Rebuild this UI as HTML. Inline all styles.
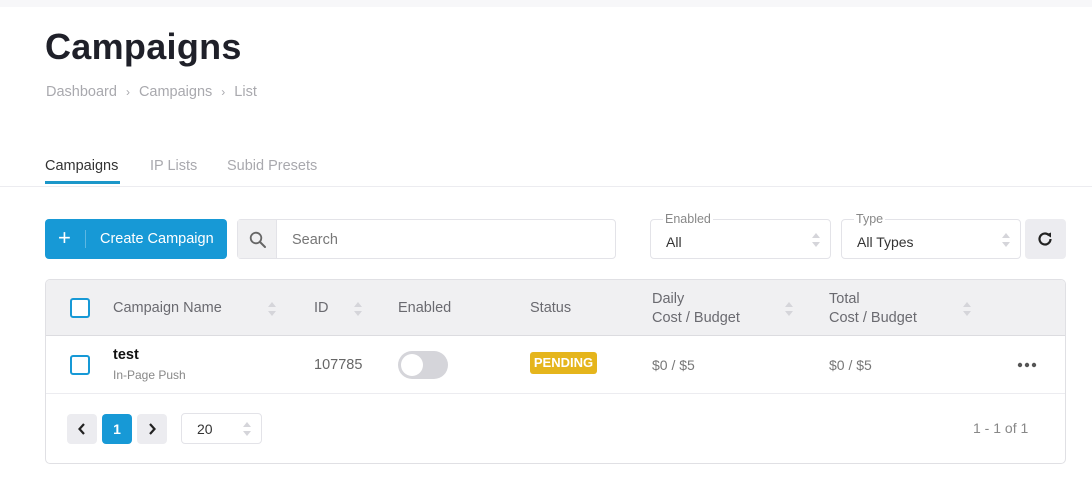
<!DOCTYPE html>
<html><head><meta charset="utf-8"><style>
*{box-sizing:border-box;margin:0;padding:0}
body{width:1092px;height:489px;background:#fff;font-family:"Liberation Sans",sans-serif;position:relative;overflow:hidden;color:#555}
.abs{position:absolute}
.topbar{left:0;top:0;width:1092px;height:7px;background:#f7f7f9}
h1{position:absolute;left:45px;top:26px;font-size:36px;font-weight:bold;color:#1f2029;letter-spacing:0.3px}
.bc{left:46px;top:84px;font-size:14.5px;color:#a9a9ae}
.bc span{margin:0 9px;font-size:12px}
.tab{top:158px;font-size:14.5px;color:#a9a9ae}
.line{left:0;top:186px;width:1092px;height:1px;background:#ececf0}
.btn{left:45px;top:219px;width:182px;height:40px;background:#1799d6;border-radius:4px;color:#fff;font-size:14.5px}
.search{left:237px;top:219px;width:379px;height:40px;border:1px solid #e3e3e8;border-radius:4px;background:#fff}
.sel{top:219px;height:40px;border:1px solid #e3e3e8;border-radius:4px;background:#fff;font-size:14px;color:#333}
.lbl{position:absolute;top:-8px;left:12px;background:#fff;padding:0 2px;font-size:12.5px;color:#888}
.arr{position:absolute;right:10px;top:13px;width:8px;height:14px}
.arr:before,.arr:after{content:"";position:absolute;left:0;border-left:4px solid transparent;border-right:4px solid transparent}
.arr:before{top:0;border-bottom:5px solid #d5d5da}
.arr:after{bottom:0;border-top:5px solid #d5d5da}
.tbl{left:45px;top:279px;width:1021px;height:185px;border:1px solid #e0e0e4;border-radius:5px;overflow:hidden;background:#fff}
.thead{position:absolute;left:0;top:0;width:100%;height:56px;background:#f0f0f2;border-bottom:1px solid #dcdce0}
.th{position:absolute;font-size:14.5px;color:#6a6a70}
.cb{position:absolute;width:20px;height:20px;border:2px solid #1799d6;border-radius:3px;background:#fff}
.row2{position:absolute;left:0;top:113px;width:100%;height:1px;background:#ececf0}
.pg{position:absolute;top:134px;width:30px;height:30px;border-radius:4px;background:#ececf0;font-size:14px;text-align:center;line-height:30px;color:#333;font-weight:bold}
.pg svg{position:absolute;left:10px;top:9px}
</style></head><body>
<div class="abs topbar"></div>
<h1>Campaigns</h1>
<div class="abs bc">Dashboard<span>›</span>Campaigns<span>›</span>List</div>
<div class="abs tab" style="left:45px;color:#333">Campaigns</div>
<div class="abs" style="left:45px;top:181px;width:75px;height:3px;background:#1b97c9"></div>
<div class="abs tab" style="left:150px">IP Lists</div>
<div class="abs tab" style="left:227px">Subid Presets</div>
<div class="abs line"></div>

<div class="abs btn"><span class="abs" style="left:13px;top:8px;font-size:22px;line-height:22px">+</span><div class="abs" style="left:40px;top:11px;width:1px;height:18px;background:rgba(255,255,255,.3)"></div><span class="abs" style="left:55px;top:12px">Create Campaign</span></div>
<div class="abs search"><div class="abs" style="left:0;top:0;width:39px;height:38px;background:#f0f0f2;border-right:1px solid #e3e3e8"></div>
<svg class="abs" style="left:11px;top:11px" width="18" height="18" viewBox="0 0 18 18"><circle cx="7" cy="7" r="5.3" fill="none" stroke="#666" stroke-width="1.8"/><path d="M11 11L16 16" stroke="#666" stroke-width="2" stroke-linecap="round"/></svg>
<span class="abs" style="left:54px;top:12px;font-size:14.5px;color:#777">Search</span></div>
<div class="abs sel" style="left:650px;width:181px"><span class="lbl">Enabled</span><span class="abs" style="left:15px;top:14px">All</span><span class="arr"></span></div>
<div class="abs sel" style="left:841px;width:180px"><span class="lbl">Type</span><span class="abs" style="left:15px;top:14px">All Types</span><span class="arr"></span></div>
<div class="abs" style="left:1025px;top:219px;width:41px;height:40px;background:#ececf0;border-radius:4px"><svg class="abs" style="left:11px;top:11px" width="18" height="18" viewBox="0 0 18 18"><path d="M14.5 9A5.5 5.5 0 1 1 12.8 5" fill="none" stroke="#222" stroke-width="2.2"/><path d="M10 4.5L15 2.5L15 7.5Z" fill="#222"/></svg></div>

<div class="abs tbl">
<div class="thead">
<div class="cb" style="left:24px;top:18px"></div>
<div class="th" style="left:67px;top:20px">Campaign Name</div><span class="arr" style="left:222px;top:22px;right:auto"></span>
<div class="th" style="left:268px;top:20px">ID</div><span class="arr" style="left:308px;top:22px;right:auto"></span>
<div class="th" style="left:352px;top:20px">Enabled</div>
<div class="th" style="left:484px;top:20px">Status</div>
<div class="th" style="left:606px;top:10px;line-height:19px">Daily<br>Cost / Budget</div><span class="arr" style="left:739px;top:22px;right:auto"></span>
<div class="th" style="left:783px;top:10px;line-height:19px">Total<br>Cost / Budget</div><span class="arr" style="left:917px;top:22px;right:auto"></span>
</div>
<div class="cb" style="left:24px;top:75px"></div>
<div class="abs" style="left:67px;top:67px;font-size:14.5px;font-weight:bold;color:#111">test</div>
<div class="abs" style="left:67px;top:88px;font-size:12px;color:#888">In-Page Push</div>
<div class="abs" style="left:268px;top:77px;font-size:14.5px;color:#666">107785</div>
<div class="abs" style="left:352px;top:71px;width:50px;height:28px;border-radius:14px;background:#d5d5da"><div class="abs" style="left:3px;top:3px;width:22px;height:22px;border-radius:50%;background:#fff"></div></div>
<div class="abs" style="left:484px;top:72px;width:67px;height:22px;background:#e5b51c;border-radius:3px;color:#fff;font-weight:bold;font-size:13px;text-align:center;line-height:22px">PENDING</div>
<div class="abs" style="left:606px;top:77px;font-size:14px;color:#777">$0 / $5</div>
<div class="abs" style="left:783px;top:77px;font-size:14px;color:#777">$0 / $5</div>
<svg class="abs" style="left:971px;top:82px" width="20" height="6"><circle cx="3" cy="3" r="2.2" fill="#555"/><circle cx="10" cy="3" r="2.2" fill="#555"/><circle cx="17" cy="3" r="2.2" fill="#555"/></svg>
<div class="row2"></div>
<div class="pg" style="left:21px"><svg width="10" height="12" viewBox="0 0 10 12"><path d="M7 1L2.5 6L7 11" fill="none" stroke="#222" stroke-width="2.2"/></svg></div>
<div class="pg" style="left:56px;background:#1799d6;color:#fff">1</div>
<div class="pg" style="left:91px"><svg width="10" height="12" viewBox="0 0 10 12"><path d="M3 1L7.5 6L3 11" fill="none" stroke="#222" stroke-width="2.2"/></svg></div>
<div class="abs" style="left:135px;top:133px;width:81px;height:31px;border:1px solid #e3e3e8;border-radius:4px;font-size:14px;color:#333"><span class="abs" style="left:15px;top:7px">20</span><span class="arr" style="top:8px"></span></div>
<div class="abs" style="left:927px;top:140px;font-size:14px;color:#888">1 - 1 of 1</div>
</div>
</body></html>
